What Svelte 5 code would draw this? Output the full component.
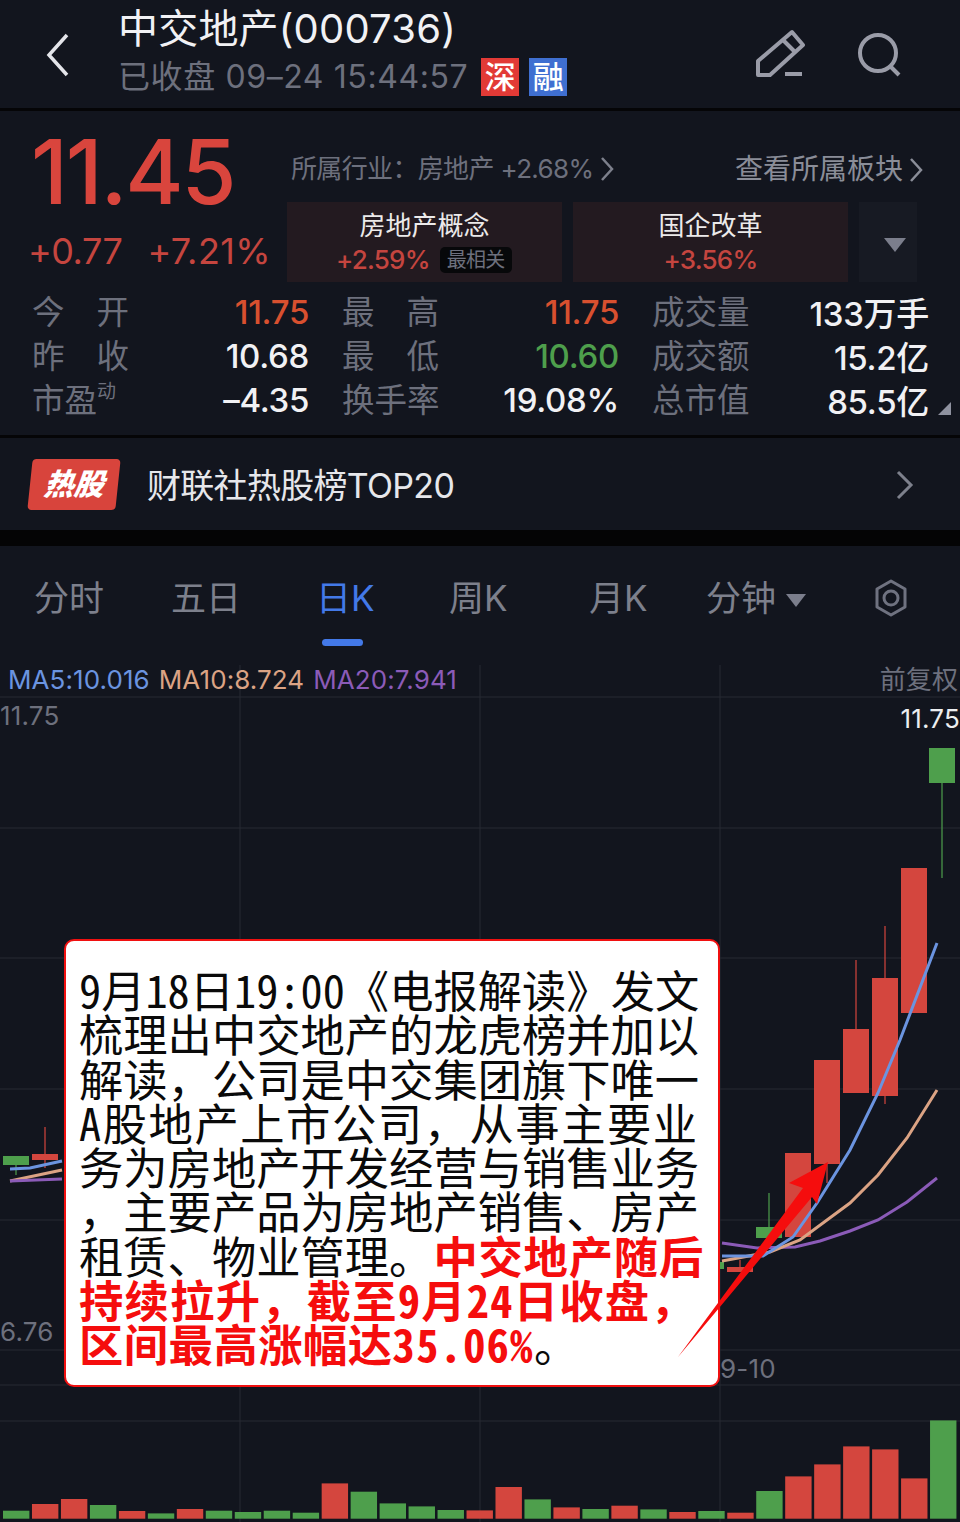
<script lang="ts">
    const stats = [
        [
            { label: "今开", value: "11.75", tone: "up" },
            { label: "最高", value: "11.75", tone: "up" },
            { label: "成交量", value: "133万手", tone: "" }
        ],
        [
            { label: "昨收", value: "10.68", tone: "" },
            { label: "最低", value: "10.60", tone: "down" },
            { label: "成交额", value: "15.2亿", tone: "" }
        ],
        [
            { label: "市盈", sup: "动", value: "–4.35", tone: "" },
            { label: "换手率", value: "19.08%", tone: "" },
            { label: "总市值", value: "85.5亿", tone: "" }
        ]
    ];

    const tabs = [
        { name: "分时", width: 137 },
        { name: "五日", width: 145 },
        { name: "日K", width: 133, active: true },
        { name: "周K", width: 140 },
        { name: "月K", width: 117 }
    ];

    const RED = "#d4463e";
    const GREEN = "#4e9f4c";

    // x, body top, body bottom, wick top, wick bottom, colour
    const candles = [
        [3, 1156, 1165, 1165, 1175, GREEN],
        [32, 1154, 1160, 1127, 1168, RED],
        [698, 1262, 1269, 1262, 1269, GREEN],
        [727, 1267, 1272, 1260, 1272, RED],
        [756, 1227, 1238, 1193, 1238, GREEN],
        [785, 1153, 1237, 1153, 1237, RED],
        [814, 1060, 1164, 1060, 1183, RED],
        [843, 1029, 1093, 960, 1093, RED],
        [872, 978, 1096, 926, 1104, RED],
        [901, 868, 1013, 868, 1013, RED],
        [929, 748, 783, 748, 878, GREEN]
    ];

    // [height, isRed] from left to right
    const volumes = [
        [8, 0], [14.7, 1], [19.7, 1], [13.7, 0], [7.7, 1], [5.3, 0], [9.7, 1], [8, 0], [6.7, 0],
        [8, 0], [6, 0], [35.3, 1], [27, 0], [15.3, 0], [12.3, 0], [8.7, 0], [8.3, 1], [31.7, 1],
        [19.3, 0], [11.3, 1], [9.7, 0], [13, 1], [9.3, 0], [6.7, 1], [7.7, 0], [6, 1], [27.7, 0],
        [42.3, 1], [54.3, 1], [72.3, 1], [69.3, 1], [40.3, 1], [98.3, 0]
    ];

    const gridY = [697, 828, 958, 1089, 1220, 1350, 1385, 1421];
    const gridX = [240, 480, 720];

    const ma5 = "722,1256 763,1256 793,1237 817,1203 850,1150 878,1093 900,1040 937,943";
    const ma10 = "722,1261 770,1252 800,1240 850,1203 878,1175 907,1138 937,1090";
    const ma20 = "722,1243 757,1248 795,1247 820,1241 850,1231 878,1220 907,1202 937,1178";
</script>

<div class="page">
    <header class="topbar">
        <svg class="back" width="24" height="44" viewBox="0 0 24 44">
            <path d="M21 2 L3 22 L21 42" fill="none" stroke="#e4e5ea" stroke-width="3.5" />
        </svg>
        <div class="titles">
            <div class="title">中交地产(000736)</div>
            <div class="subtitle">
                <span>已收盘 09–24 15:44:57</span>
                <span class="tag red">深</span>
                <span class="tag blue">融</span>
            </div>
        </div>
        <svg class="pencil" width="50" height="50" viewBox="756 30 50 50">
            <path d="M759 76 V62 L793 33 L804 46 L771 76 Z" fill="none" stroke="#9a9ca8" stroke-width="4" stroke-linejoin="round" />
            <path d="M784 41 L797 54" fill="none" stroke="#9a9ca8" stroke-width="4" />
            <path d="M786 75 H803" fill="none" stroke="#9a9ca8" stroke-width="4" />
        </svg>
        <svg class="search" width="46" height="46" viewBox="856 30 46 46">
            <circle cx="878" cy="52" r="18" fill="none" stroke="#9a9ca8" stroke-width="4" />
            <path d="M890 65 L899 74" fill="none" stroke="#9a9ca8" stroke-width="4" />
        </svg>
    </header>

    <section class="quote">
        <div class="quote-top">
            <div class="price-col">
                <div class="price">11.45</div>
                <div class="change"><span>+0.77</span><span>+7.21%</span></div>
            </div>
            <div class="sector-col">
                <div class="sector-links">
                    <span class="industry">所属行业：房地产 +2.68%
                        <svg width="14" height="26" viewBox="0 0 14 26"><path d="M2 2 L12 13 L2 24" fill="none" stroke="#7d808c" stroke-width="2.5" /></svg>
                    </span>
                    <span class="all-sectors">查看所属板块
                        <svg width="14" height="26" viewBox="0 0 14 26"><path d="M2 2 L12 13 L2 24" fill="none" stroke="#8a8d98" stroke-width="2.5" /></svg>
                    </span>
                </div>
                <div class="chips">
                    <div class="chip">
                        <div class="chip-name">房地产概念</div>
                        <div class="chip-pct">+2.59%<span class="best">最相关</span></div>
                    </div>
                    <div class="chip">
                        <div class="chip-name">国企改革</div>
                        <div class="chip-pct">+3.56%</div>
                    </div>
                    <div class="chip-more"><span class="caret"></span></div>
                </div>
            </div>
        </div>
        <div class="stats">
            {#each stats as row}
                {#each row as cell}
                    <div class="stat">
                        <span class="stat-label" class:wide={cell.label.length === 2 && !cell.sup}>{cell.label}{#if cell.sup}<sup>{cell.sup}</sup>{/if}</span>
                        <span class="stat-value {cell.tone}">{cell.value}</span>
                    </div>
                {/each}
            {/each}
        </div>
        <span class="corner"></span>
    </section>

    <section class="hot">
        <div class="hot-badge"><span>热股</span></div>
        <div class="hot-text">财联社热股榜TOP20</div>
        <svg class="hot-arrow" width="18" height="30" viewBox="0 0 18 30"><path d="M2 2 L15 15 L2 28" fill="none" stroke="#7d808c" stroke-width="3" /></svg>
    </section>

    <nav class="tabs">
        {#each tabs as tab}
            <div class="tab" class:active={tab.active} style="width: {tab.width}px">
                {tab.name}
                {#if tab.active}<span class="underline"></span>{/if}
            </div>
        {/each}
        <div class="tab minute">分钟<span class="caret small"></span></div>
        <svg class="hex" width="36" height="40" viewBox="0 0 36 40">
            <path d="M18 3 L32 11 V29 L18 37 L4 29 V11 Z" fill="none" stroke="#6f7280" stroke-width="3" stroke-linejoin="round" />
            <circle cx="18" cy="20" r="7" fill="none" stroke="#6f7280" stroke-width="3" />
        </svg>
    </nav>

    <section class="chart">
        <svg class="plot" width="960" height="862" viewBox="0 660 960 862">
            {#each gridY as y}
                <line x1="0" x2="960" y1={y} y2={y} stroke="#262a33" stroke-width="1" />
            {/each}
            {#each gridX as x}
                <line x1={x} x2={x} y1="665" y2="1522" stroke="#262a33" stroke-width="1" />
            {/each}

            {#each candles as [x, top, bottom, wickTop, wickBottom, color]}
                <line x1={x + 13} x2={x + 13} y1={wickTop} y2={wickBottom} stroke={color} stroke-width="1.5" opacity="0.8" />
                <rect x={x} y={top} width="26" height={bottom - top} fill={color} />
            {/each}

            {#each volumes as [h, isRed], i}
                <rect x={3 + i * 28.97} y={1518.7 - h} width="26.4" height={h} fill={isRed ? RED : GREEN} />
            {/each}

            <polyline points="10,1169 30,1168 62,1161" fill="none" stroke="#6b94e0" stroke-width="3" />
            <polyline points="10,1181 62,1170" fill="none" stroke="#dba384" stroke-width="3" />
            <polyline points="10,1181 62,1179" fill="none" stroke="#8b5bb8" stroke-width="3" />
            <polyline points={ma20} fill="none" stroke="#8b5bb8" stroke-width="3" />
            <polyline points={ma10} fill="none" stroke="#dba384" stroke-width="3" />
            <polyline points={ma5} fill="none" stroke="#6b94e0" stroke-width="3" />
        </svg>

        <div class="legend">
            <span class="ma5">MA5:10.016</span>
            <span class="ma10">MA10:8.724</span>
            <span class="ma20">MA20:7.941</span>
            <span class="adjust">前复权</span>
        </div>
        <span class="axis high-left">11.75</span>
        <span class="axis high-right">11.75</span>
        <span class="axis low-left">6.76</span>
        <span class="axis date">9-10</span>

        <div class="note">
            <div><span class="num">9</span>月<span class="num">18</span>日<span class="num">19:00</span>《电报解读》发文</div>
            <div>梳理出中交地产的龙虎榜并加以</div>
            <div>解读，公司是中交集团旗下唯一</div>
            <div class="stretch"><span class="num">A</span>股地产上市公司，从事主要业</div>
            <div>务为房地产开发经营与销售业务</div>
            <div>，主要产品为房地产销售、房产</div>
            <div>租赁、物业管理。<b class="tail">中交地产随后</b></div>
            <div class="stretch-red"><b>持续拉升，截至<span class="num">9</span>月<span class="num">24</span>日收盘，</b></div>
            <div class="last"><b>区间最高涨幅达<span class="num">35.06%</span></b>。</div>
        </div>

        <svg class="arrow" width="960" height="862" viewBox="0 660 960 862">
            <polygon points="678,1357 803,1188 789,1183 828,1162 817,1204 812,1197" fill="#f50d0d" />
        </svg>
    </section>
</div>

<style>
    :global(body) {
        margin: 0;
        background: #12151e;
    }

    .page {
        width: 960px;
        height: 1522px;
        overflow: hidden;
        background: #12151e;
        font-family: Inter, "Noto Sans CJK SC", sans-serif;
        color: #e6e7eb;
    }

    .topbar {
        display: flex;
        align-items: center;
        height: 108px;
        padding-left: 46px;
        border-bottom: 3px solid #050507;
    }

    .back {
        margin-right: 50px;
        margin-top: 2px;
    }

    .titles {
        flex: 1;
        margin-left: -2px;
    }

    .title {
        font-size: 40px;
        line-height: 50px;
        margin-top: -8px;
        letter-spacing: 0.2px;
        color: #f1f1f4;
    }

    .subtitle {
        display: flex;
        align-items: center;
        font-size: 32px;
        line-height: 40px;
        margin-top: 3px;
        color: #6d707d;
        letter-spacing: 0.6px;
    }

    .tag {
        display: block;
        width: 38px;
        height: 38px;
        line-height: 37px;
        text-align: center;
        font-size: 31px;
        font-weight: 500;
        color: #fff;
        letter-spacing: 0;
        margin-left: 10px;
    }

    .tag.red {
        background: #e23a36;
        margin-left: 13px;
    }

    .tag.blue {
        background: #3f6fd1;
    }

    .pencil {
        margin-right: 51px;
    }

    .search {
        margin-right: 58px;
    }

    .quote {
        position: relative;
        height: 324px;
        border-bottom: 3px solid #050507;
    }

    .quote-top {
        display: flex;
        height: 171px;
    }

    .price-col {
        width: 287px;
        padding-left: 32px;
        box-sizing: border-box;
    }

    .price {
        font-size: 89px;
        font-weight: 500;
        line-height: 100px;
        margin-top: 11px;
        margin-left: -1px;
        letter-spacing: -2.2px;
        color: #d9453d;
    }

    .change {
        display: flex;
        gap: 25px;
        margin-top: 9px;
        margin-left: -4px;
        font-size: 36px;
        line-height: 40px;
        letter-spacing: -0.5px;
        color: #c5453f;
    }

    .change span:last-child {
        letter-spacing: 0.4px;
    }

    .sector-col {
        flex: 1;
    }

    .sector-links {
        display: flex;
        justify-content: space-between;
        align-items: center;
        height: 91px;
        padding: 0 37px 0 4px;
    }

    .sector-links svg {
        vertical-align: -4px;
    }

    .industry {
        font-size: 26px;
        color: #6d707d;
        margin-top: 20px;
        letter-spacing: -0.65px;
    }

    .all-sectors {
        font-size: 28px;
        color: #8a8d98;
        margin-top: 20px;
    }

    .all-sectors svg {
        margin-left: -2px;
    }

    .chips {
        display: flex;
        gap: 11px;
    }

    .chip {
        width: 275px;
        height: 80px;
        background: #231a20;
        text-align: center;
    }

    .chip-name {
        font-size: 26px;
        line-height: 34px;
        padding-top: 7px;
        color: #eceaea;
    }

    .chip-pct {
        font-size: 26px;
        line-height: 34px;
        color: #c5453f;
        font-weight: 500;
        letter-spacing: -0.8px;
    }

    .chip:first-child .chip-pct {
        display: flex;
        align-items: center;
        padding-left: 49px;
    }

    .best {
        margin-left: 10px;
        width: 72px;
        height: 26px;
        line-height: 26px;
        border-radius: 5px;
        background: #07080a;
        color: #6d707d;
        font-size: 20px;
        font-weight: 400;
    }

    .chip-more {
        width: 58px;
        height: 80px;
        padding: 6px 0 0 14px;
        box-sizing: border-box;
        background: #171a23;
        display: flex;
        align-items: center;
        justify-content: center;
    }

    .caret {
        width: 0;
        height: 0;
        border-left: 11px solid transparent;
        border-right: 11px solid transparent;
        border-top: 14px solid #7b7e8c;
    }

    .caret.small {
        display: inline-block;
        border-left-width: 10px;
        border-right-width: 10px;
        border-top-width: 13px;
        margin-left: 10px;
        vertical-align: 4px;
    }

    .stats {
        display: grid;
        grid-template-columns: repeat(3, 277px);
        column-gap: 33px;
        grid-auto-rows: 44px;
        padding-left: 32px;
        margin-top: 7px;
    }

    .stat {
        display: flex;
        justify-content: space-between;
        align-items: center;
    }

    .stat-label {
        width: 97px;
        font-size: 32.5px;
        margin-bottom: 4px;
        color: #6d707d;
        white-space: nowrap;
    }

    .stat-label.wide {
        text-align-last: justify;
    }

    .stat-label sup {
        font-size: 19px;
        vertical-align: 14px;
        line-height: 0;
    }

    .stat-value {
        font-size: 33px;
        font-weight: 500;
        margin-top: 2px;
        letter-spacing: -0.3px;
        color: #f1f1f4;
    }

    .stat-value.up {
        color: #d8502f;
    }

    .stat-value.down {
        color: #4e9f4c;
    }

    .corner {
        position: absolute;
        right: 9px;
        bottom: 20px;
        width: 0;
        height: 0;
        border-bottom: 13px solid #8f92a0;
        border-left: 13px solid transparent;
    }

    .hot {
        display: flex;
        align-items: center;
        height: 90px;
        padding: 0 46px 2px 30px;
        border-bottom: 16px solid #040405;
    }

    .hot-badge {
        width: 88px;
        height: 51px;
        background: #d8443c;
        border-radius: 4px;
        transform: skewX(-6deg);
        text-align: center;
        margin: 2px 29px 0 0;
    }

    .hot-badge span {
        display: block;
        font-size: 30px;
        line-height: 50px;
        font-weight: 900;
        font-style: italic;
        color: #fff;
    }

    .hot-text {
        flex: 1;
        font-size: 34px;
        letter-spacing: -0.7px;
        color: #e6e7eb;
    }

    .hot-arrow {
        margin-top: 4px;
    }

    .tabs {
        display: flex;
        align-items: center;
        height: 114px;
        padding-left: 34px;
    }

    .tab {
        position: relative;
        font-size: 35px;
        line-height: 104px;
        height: 104px;
        color: #7d808c;
        margin-top: -10px;
        flex: none;
    }

    .tab.active {
        color: #4379e8;
    }

    .underline {
        position: absolute;
        left: 6px;
        top: 93px;
        width: 41px;
        height: 7px;
        border-radius: 4px;
        background: #4379e8;
    }

    .tab.minute {
        width: 167px;
    }

    .hex {
        margin-top: -10px;
    }

    .chart {
        position: relative;
        height: 862px;
    }

    .plot,
    .arrow {
        position: absolute;
        left: 0;
        top: 0;
    }

    .legend {
        position: absolute;
        left: 8px;
        right: 2px;
        top: 3px;
        display: flex;
        gap: 9px;
        font-size: 26px;
        line-height: 34px;
        letter-spacing: 0.08px;
    }

    .ma5 {
        color: #6b94e0;
    }

    .ma10 {
        color: #dba384;
    }

    .ma20 {
        color: #8b5bb8;
    }

    .adjust {
        margin-left: auto;
        color: #6d707d;
    }

    .axis {
        position: absolute;
        font-size: 26px;
        line-height: 30px;
        letter-spacing: 0.2px;
        color: #6d707d;
    }

    .high-left {
        left: 0;
        top: 41px;
    }

    .high-right {
        right: 0;
        top: 44px;
        color: #eceef0;
    }

    .low-left {
        left: 0;
        top: 657px;
    }

    .date {
        left: 720px;
        top: 694px;
    }

    .note {
        position: absolute;
        left: 64px;
        top: 279px;
        padding: 26px 0 0 13px;
        width: 639px;
        height: 418px;
        background: #fff;
        border: 2px solid #f01010;
        border-radius: 10px;
        font-size: 44.3px;
        line-height: 44.3px;
        color: #0a0a0a;
        font-family: "Noto Sans CJK SC", sans-serif;
        white-space: nowrap;
    }

    .note .num {
        font-feature-settings: "hwid";
    }

    .note b {
        color: #f50d0d;
        font-weight: 700;
    }

    .note .stretch {
        letter-spacing: 1.55px;
    }

    .note .stretch-red {
        letter-spacing: 1.25px;
    }

    .note .tail {
        letter-spacing: 0.8px;
    }

    .note .last {
        letter-spacing: 0.5px;
    }

    .note .last .num {
        letter-spacing: 1.4px;
    }
</style>
